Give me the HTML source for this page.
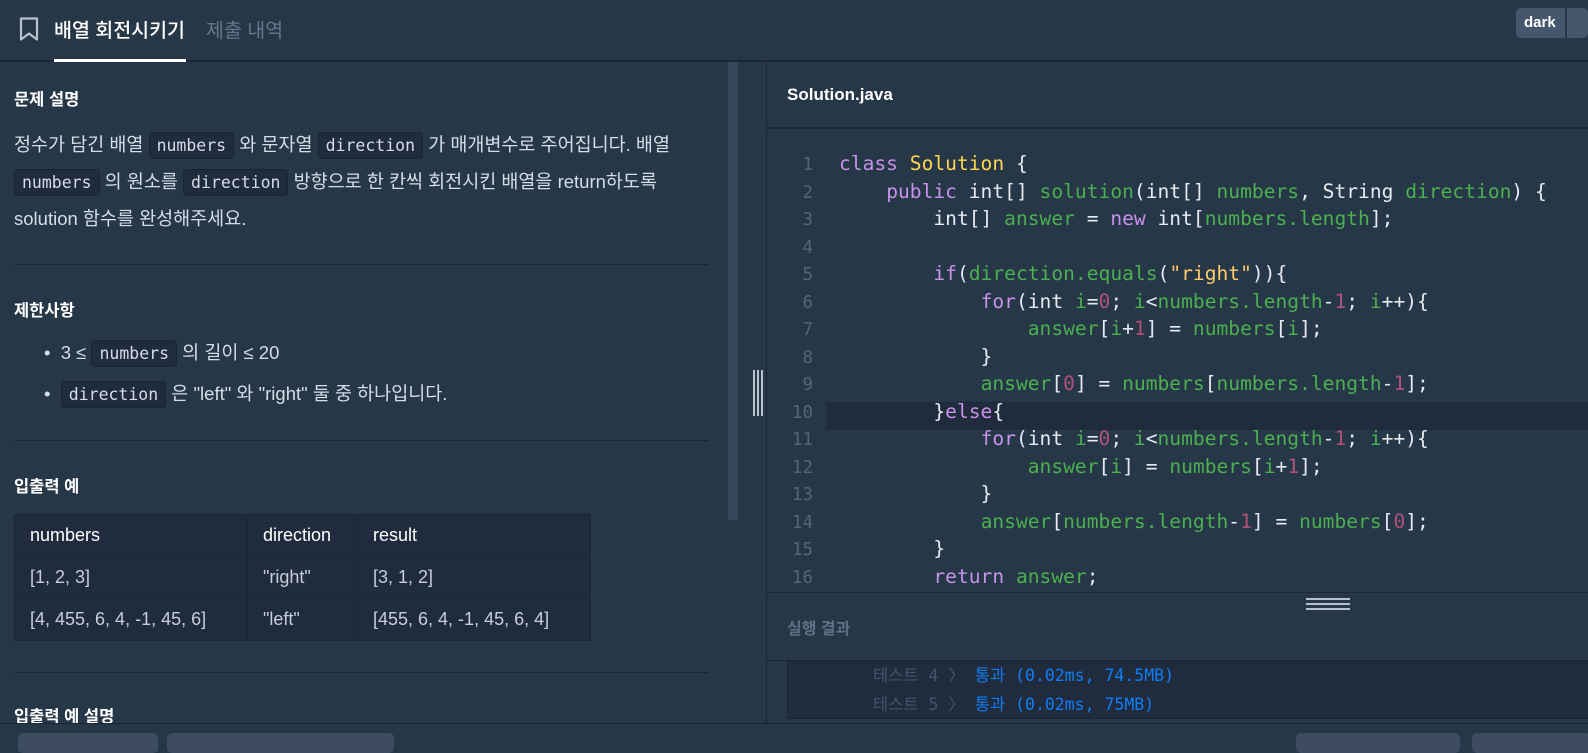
<!DOCTYPE html>
<html><head><meta charset="utf-8"><style>
*{box-sizing:border-box;margin:0;padding:0}
body{width:1588px;height:750px;overflow:hidden;background:#263747;color:#d5dde7;font-family:"Liberation Sans","Noto Sans CJK KR",sans-serif;position:relative}
.abs{position:absolute}
.hdr{left:0;top:0;width:1588px;height:62px;border-bottom:2px solid #1c2736}
.code{font-family:"DejaVu Sans Mono",monospace;background:#202b3d;border:1px solid #1b2535;border-radius:4px;padding:3px 7px;font-size:16.5px;color:#d5dde7}
.t{font-size:18.5px;line-height:36px;color:#d5dde7}
h3{font-size:16.5px;font-weight:bold;color:#fff;position:absolute;left:14px}
.hr{position:absolute;left:14px;width:694px;height:1px;background:#1b2535}
table{border-collapse:collapse;font-size:18px;color:#c6cfd9}
td{border:1px solid #1b2535;background:#202b3d;height:42px;padding:0 15px}
.ln{position:absolute;left:767px;width:46px;text-align:right;font-family:"DejaVu Sans Mono",monospace;font-size:17.5px;color:#55657a}
.cl{position:absolute;left:839px;font-family:"DejaVu Sans Mono",monospace;font-size:19.6px;color:#e6ebf1;white-space:pre}
.k{color:#c792ea}.g{color:#4caf50}.y{color:#ffd54f}.n{color:#b0517a}.s{color:#ffcb6b}
</style></head><body>
<div class="abs hdr"></div>
<svg class="abs" style="left:19px;top:17px" width="20" height="24" viewBox="0 0 20 24"><path d="M2 1.5h16v21l-8-6-8 6z" fill="none" stroke="#b8c2cc" stroke-width="2.2" stroke-linejoin="round"/></svg>
<div class="abs" style="left:54px;top:14px;font-size:19.5px;color:#fff;font-weight:500">배열 회전시키기</div>
<div class="abs" style="left:54px;top:59px;width:132px;height:3px;background:#fff"></div>
<div class="abs" style="left:206px;top:14px;font-size:19.5px;color:#64788c">제출 내역</div>
<div class="abs" style="left:1516px;top:8px;width:72px;height:30px;background:#44576c;border-radius:5px;color:#fff;font-size:15px;font-weight:bold;padding:6px 0 0 8px">dark</div>
<div class="abs" style="left:1565px;top:8px;width:2px;height:30px;background:#263747"></div>

<h3 style="top:86px">문제 설명</h3>
<div class="abs t" style="left:14px;top:127px;width:705px">정수가 담긴 배열 <span class="code">numbers</span> 와 문자열 <span class="code">direction</span> 가 매개변수로 주어집니다. 배열 <span class="code">numbers</span> 의 원소를 <span class="code">direction</span> 방향으로 한 칸씩 회전시킨 배열을 return하도록 solution 함수를 완성해주세요.</div>
<div class="hr" style="top:264px"></div>
<h3 style="top:297px">제한사항</h3>
<div class="abs t" style="left:44px;top:335px">• &nbsp;3 ≤ <span class="code">numbers</span> 의 길이 ≤ 20</div>
<div class="abs t" style="left:44px;top:376px">• &nbsp;<span class="code">direction</span> 은 "left" 와 "right" 둘 중 하나입니다.</div>
<div class="hr" style="top:440px"></div>
<h3 style="top:473px">입출력 예</h3>
<table class="abs" style="left:14px;top:514px;width:577px">
<tr><td style="width:233px;color:#fff">numbers</td><td style="width:110px;color:#fff">direction</td><td style="color:#fff">result</td></tr>
<tr><td>[1, 2, 3]</td><td>"right"</td><td>[3, 1, 2]</td></tr>
<tr><td>[4, 455, 6, 4, -1, 45, 6]</td><td>"left"</td><td>[455, 6, 4, -1, 45, 6, 4]</td></tr>
</table>
<div class="hr" style="top:672px"></div>
<h3 style="top:703px">입출력 예 설명</h3>
<div class="abs" style="left:728px;top:62px;width:10px;height:458px;background:#34465a"></div>
<div class="abs" style="left:753px;top:370px;width:10px;height:46px;border-left:2px solid #b8c2cc;border-right:2px solid #b8c2cc"></div>
<div class="abs" style="left:757px;top:370px;width:2px;height:46px;background:#b8c2cc"></div>
<div class="abs" style="left:766px;top:62px;width:1px;height:662px;background:#1b2535"></div>

<div class="abs" style="left:787px;top:85px;font-size:17px;font-weight:bold;color:#fff">Solution.java</div>
<div class="abs" style="left:767px;top:127px;width:821px;height:2px;background:#1c2736"></div>
<div class="abs" style="left:826px;top:402px;width:762px;height:28px;background:#202b3d"></div>
<div class="ln" style="top:155px">1</div><div class="cl" style="top:152px"><span class="k">class</span> <span class="y">Solution</span> {</div>
<div class="ln" style="top:183px">2</div><div class="cl" style="top:180px">    <span class="k">public</span> int[] <span class="g">solution</span>(int[] <span class="g">numbers</span>, String <span class="g">direction</span>) {</div>
<div class="ln" style="top:210px">3</div><div class="cl" style="top:207px">        int[] <span class="g">answer</span> = <span class="k">new</span> int[<span class="g">numbers.length</span>];</div>
<div class="ln" style="top:238px">4</div>
<div class="ln" style="top:265px">5</div><div class="cl" style="top:262px">        <span class="k">if</span>(<span class="g">direction.equals</span>(<span class="s">"right"</span>)){</div>
<div class="ln" style="top:293px">6</div><div class="cl" style="top:290px">            <span class="k">for</span>(int <span class="g">i</span>=<span class="n">0</span>; <span class="g">i</span>&lt;<span class="g">numbers.length</span>-<span class="n">1</span>; <span class="g">i</span>++){</div>
<div class="ln" style="top:320px">7</div><div class="cl" style="top:317px">                <span class="g">answer</span>[<span class="g">i</span>+<span class="n">1</span>] = <span class="g">numbers</span>[<span class="g">i</span>];</div>
<div class="ln" style="top:348px">8</div><div class="cl" style="top:345px">            }</div>
<div class="ln" style="top:375px">9</div><div class="cl" style="top:372px">            <span class="g">answer</span>[<span class="n">0</span>] = <span class="g">numbers</span>[<span class="g">numbers.length</span>-<span class="n">1</span>];</div>
<div class="ln" style="top:403px">10</div><div class="cl" style="top:400px">        }<span class="k">else</span>{</div>
<div class="ln" style="top:430px">11</div><div class="cl" style="top:427px">            <span class="k">for</span>(int <span class="g">i</span>=<span class="n">0</span>; <span class="g">i</span>&lt;<span class="g">numbers.length</span>-<span class="n">1</span>; <span class="g">i</span>++){</div>
<div class="ln" style="top:458px">12</div><div class="cl" style="top:455px">                <span class="g">answer</span>[<span class="g">i</span>] = <span class="g">numbers</span>[<span class="g">i</span>+<span class="n">1</span>];</div>
<div class="ln" style="top:485px">13</div><div class="cl" style="top:482px">            }</div>
<div class="ln" style="top:513px">14</div><div class="cl" style="top:510px">            <span class="g">answer</span>[<span class="g">numbers.length</span>-<span class="n">1</span>] = <span class="g">numbers</span>[<span class="n">0</span>];</div>
<div class="ln" style="top:540px">15</div><div class="cl" style="top:537px">        }</div>
<div class="ln" style="top:568px">16</div><div class="cl" style="top:565px">        <span class="k">return</span> <span class="g">answer</span>;</div>

<div class="abs" style="left:767px;top:592px;width:821px;height:132px;background:#263747;border-top:1px solid #1b2535"></div>
<div class="abs" style="left:1306px;top:598px;width:44px;height:12px;border-top:2px solid #b8c2cc;border-bottom:2px solid #b8c2cc"></div>
<div class="abs" style="left:1306px;top:603px;width:44px;height:2px;background:#b8c2cc"></div>
<div class="abs" style="left:787px;top:615px;font-size:16px;font-weight:bold;color:#5f7185">실행 결과</div>
<div class="abs" style="left:767px;top:660px;width:821px;height:1px;background:#1b2535"></div>
<div class="abs" style="left:787px;top:661px;width:801px;height:58px;background:#202b3d;border-left:1px solid #1b2535;border-bottom:1px solid #1b2535"></div>
<div class="abs" style="left:873px;top:661px;font-family:'DejaVu Sans Mono','Noto Sans CJK KR',monospace;font-size:16.5px;line-height:29px;white-space:pre;color:#44546a">테스트 4 〉 <span style="color:#0f7ef5">통과 (0.02ms, 74.5MB)</span>
테스트 5 〉 <span style="color:#0f7ef5">통과 (0.02ms, 75MB)</span></div>

<div class="abs" style="left:0;top:723px;width:1588px;height:27px;background:#263747;border-top:1px solid #1b2535"></div>
<div class="abs" style="left:18px;top:733px;width:140px;height:20px;background:#3d4c60;border-radius:5px"></div>
<div class="abs" style="left:167px;top:733px;width:227px;height:20px;background:#3d4c60;border-radius:5px"></div>
<div class="abs" style="left:1296px;top:733px;width:164px;height:20px;background:#3d4c60;border-radius:5px"></div>
<div class="abs" style="left:1472px;top:733px;width:120px;height:20px;background:#3d4c60;border-radius:5px"></div>
</body></html>
